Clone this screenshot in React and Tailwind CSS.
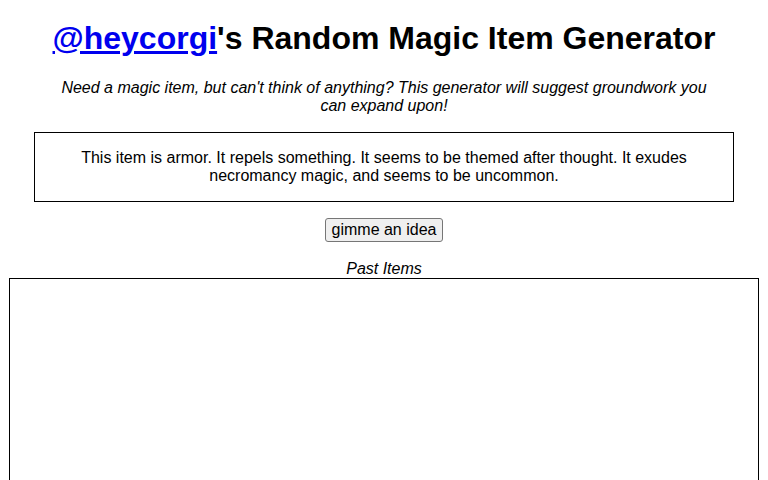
export default function App() {
  return (
    <div className="min-h-[480px] bg-white text-black font-['Liberation_Sans',Arial,sans-serif]">
      {/* Title */}
      <h1 className="pt-[20px] text-center text-[32px] font-bold leading-[37px]">
        <a href="#" className="text-[#0000ee] underline">
          @heycorgi
        </a>
        's Random Magic Item Generator
      </h1>

      {/* Intro */}
      <p className="mx-auto mt-[22px] max-w-[660px] text-center text-base italic leading-[18px]">
        Need a magic item, but can't think of anything? This generator will suggest groundwork you
        can expand upon!
      </p>

      {/* Result */}
      <div className="mx-auto mt-[17px] w-[700px] border border-black px-4 py-[16px] text-center text-base leading-[18px]">
        This item is armor. It repels something. It seems to be themed after thought. It exudes
        necromancy magic, and seems to be uncommon.
      </div>

      <div className="mt-[16px] flex justify-center">
        <button className="h-[24px] rounded-[3px] border border-[#767676] bg-[#efefef] px-[6px] text-base leading-[18px]">
          gimme an idea
        </button>
      </div>

      {/* Past items */}
      <p className="mt-[18px] text-center text-base italic leading-[18px]">Past Items</p>
      <div className="mx-auto h-[220px] w-[750px] border-[1.5px] border-black" />
    </div>
  );
}
